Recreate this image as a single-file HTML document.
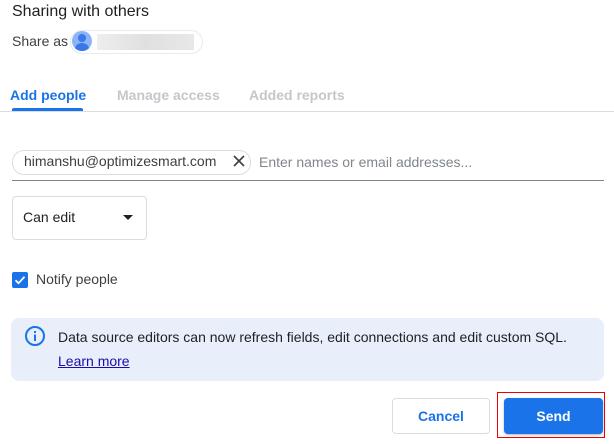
<!DOCTYPE html>
<html><head><style>
body{margin:0;width:614px;height:444px;background:#fff;font-family:"Liberation Sans",Arial,sans-serif;position:relative;overflow:hidden;color:#202124}
.a{position:absolute;white-space:nowrap}
</style></head><body>
<div class="a" style="left:12px;top:3px;font-size:16px;color:#202124">Sharing with others</div>
<div class="a" style="left:12px;top:33px;font-size:14px;color:#3c4043">Share as</div>
<div class="a" style="left:70px;top:30px;width:131px;height:22px;border:1px solid #e8eaed;border-radius:12px"></div>
<div class="a" style="left:72px;top:31px;width:20px;height:20px;border-radius:50%;background:#8ab4f8;overflow:hidden">
<div class="a" style="left:6px;top:3px;width:8px;height:8px;border-radius:50%;background:#3b78e7"></div>
<div class="a" style="left:3px;top:12px;width:14px;height:12px;border-radius:50%;background:#3b78e7"></div></div>
<div class="a" style="left:97px;top:34px;width:97px;height:16px;background:linear-gradient(90deg,#eee,#e0e0e0,#e8e8e8)"></div>
<div class="a" style="left:10px;top:87px;font-size:14px;font-weight:bold;color:#1a73e8">Add people</div>
<div class="a" style="left:117px;top:87px;font-size:14px;font-weight:bold;color:#c4c7cb">Manage access</div>
<div class="a" style="left:249px;top:87px;font-size:14px;font-weight:bold;color:#c4c7cb">Added reports</div>
<div class="a" style="left:12px;top:108px;width:71px;height:3px;background:#1a73e8;border-radius:2px 2px 0 0"></div>
<div class="a" style="left:0;top:111px;width:614px;height:1px;background:#dadce0"></div>
<div class="a" style="left:12px;top:150px;width:237px;height:23px;border:1px solid #dadce0;border-radius:12px"></div>
<div class="a" style="left:24px;top:153px;font-size:14px;color:#3c4043">himanshu@optimizesmart.com</div>
<svg class="a" style="left:232px;top:154px" width="14" height="14" viewBox="0 0 14 14"><path d="M2 2L12 12M12 2L2 12" stroke="#3c4043" stroke-width="1.6"/></svg>
<div class="a" style="left:259px;top:154px;font-size:14px;color:#80868b">Enter names or email addresses...</div>
<div class="a" style="left:12px;top:180px;width:592px;height:1px;background:#80868b"></div>
<div class="a" style="left:12px;top:196px;width:133px;height:42px;border:1px solid #dadce0;border-radius:4px"></div>
<div class="a" style="left:23px;top:209px;font-size:14px;color:#202124">Can edit</div>
<div class="a" style="left:123px;top:215px;width:0;height:0;border-left:5px solid transparent;border-right:5px solid transparent;border-top:5px solid #202124"></div>
<div class="a" style="left:12px;top:272px;width:16px;height:16px;background:#1a73e8;border-radius:2px"></div>
<svg class="a" style="left:12px;top:272px" width="16" height="16" viewBox="0 0 16 16"><path d="M3.5 8.2L6.5 11.2L12.5 4.8" stroke="#fff" stroke-width="1.8" fill="none"/></svg>
<div class="a" style="left:36px;top:271px;font-size:14px;color:#3c4043">Notify people</div>
<div class="a" style="left:11px;top:318px;width:593px;height:63px;background:#e8effb;border-radius:8px"></div>
<svg class="a" style="left:24px;top:325px" width="22" height="22" viewBox="0 0 22 22"><circle cx="11" cy="11" r="9" fill="none" stroke="#1a73e8" stroke-width="2"/><rect x="10" y="9.5" width="2" height="6.5" fill="#1a73e8"/><rect x="10" y="6" width="2" height="2" fill="#1a73e8"/></svg>
<div class="a" style="left:58px;top:329px;font-size:14px;color:#202124">Data source editors can now refresh fields, edit connections and edit custom SQL.</div>
<div class="a" style="left:58px;top:353px;font-size:14px;color:#1a0dab;text-decoration:underline">Learn more</div>
<div class="a" style="left:392px;top:398px;width:96px;height:34px;border:1px solid #dadce0;border-radius:4px;color:#1a73e8;font-size:14px;font-weight:bold;text-align:center;line-height:34px">Cancel</div>
<div class="a" style="left:497px;top:392px;width:106px;height:44px;border:1px solid #e00"></div>
<div class="a" style="left:504px;top:398px;width:99px;height:36px;background:#1a73e8;border-radius:4px;color:#fff;font-size:14px;font-weight:bold;text-align:center;line-height:36px;box-shadow:0 1px 2px rgba(0,0,0,.3)">Send</div>
</body></html>
